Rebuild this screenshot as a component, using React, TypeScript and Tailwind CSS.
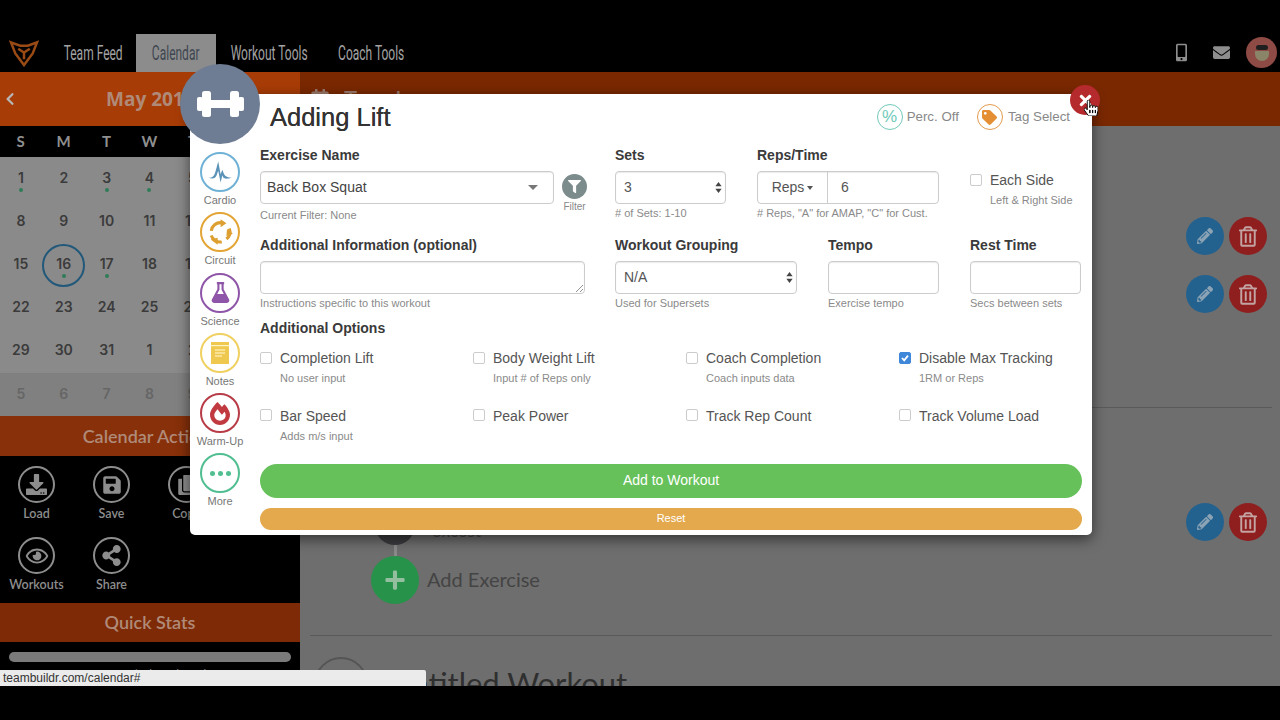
import {
  FaCopy,
  FaEnvelope,
  FaRegEye,
  FaFireAlt,
  FaFilter,
  FaHandPointer,
  FaMobileAlt,
  FaPencilAlt,
  FaPlus,
  FaSave,
  FaShareAlt,
  FaTag,
  FaTimes,
  FaRegTrashAlt,
  FaChevronLeft,
  FaRegCalendarAlt,
  FaDownload,
} from 'react-icons/fa';
import type { ReactNode } from 'react';

const sansFont = "font-['Liberation_Sans',Arial,sans-serif]";
const latoFont = "font-['Lato',sans-serif]";

const calendarDays = [
  { n: 1, dot: true }, { n: 2 }, { n: 3, dot: true }, { n: 4, dot: true }, { n: 5 }, { n: 6 }, { n: 7 },
  { n: 8 }, { n: 9 }, { n: 10 }, { n: 11 }, { n: 12 }, { n: 13 }, { n: 14 },
  { n: 15 }, { n: 16, today: true, dot: true }, { n: 17, dot: true }, { n: 18 }, { n: 19 }, { n: 20 }, { n: 21 },
  { n: 22 }, { n: 23 }, { n: 24 }, { n: 25 }, { n: 26 }, { n: 27 }, { n: 28 },
  { n: 29 }, { n: 30 }, { n: 31 }, { n: 1 }, { n: 2 }, { n: 3 }, { n: 4 },
  { n: 5, muted: true }, { n: 6, muted: true }, { n: 7, muted: true }, { n: 8, muted: true }, { n: 9, muted: true }, { n: 10, muted: true }, { n: 11, muted: true },
];

function NavLabel({ children }: { children: ReactNode }) {
  return <span className="inline-block origin-center scale-x-[0.6] whitespace-nowrap">{children}</span>;
}

function TopNav() {
  return (
    <header className="flex h-[72px] items-end bg-black">
      <svg viewBox="0 0 30 28" className="mb-[5px] ml-[9px] h-[27px] w-[30px]" fill="none" stroke="#9a4a14" strokeWidth="2.6">
        <path d="M1.5 2.5 L11 6 H19 L28.5 2.5 L24 14 L15 26 L6 14 Z" />
        <path d="M9 9 L15 13 L21 9 M15 13 V20" />
      </svg>
      <nav className="ml-[25px] flex h-[38px] font-['Roboto',sans-serif] text-[20px] text-[#a3a3a3]">
        <a className="flex w-[58px] items-center justify-center">
          <NavLabel>Team Feed</NavLabel>
        </a>
        <a className="ml-[14px] flex w-[80px] items-center justify-center bg-[#8c8c8c] text-[#3e4650]">
          <NavLabel>Calendar</NavLabel>
        </a>
        <a className="ml-[14px] flex w-[78px] items-center justify-center">
          <NavLabel>Workout Tools</NavLabel>
        </a>
        <a className="ml-[30px] flex w-[66px] items-center justify-center">
          <NavLabel>Coach Tools</NavLabel>
        </a>
      </nav>
      <div className="ml-auto mb-[4px] flex items-center text-[#8d8d8d]">
        <FaMobileAlt className="mr-[25px] h-[19px] w-[11px]" />
        <FaEnvelope className="mr-[15px] h-[17px] w-[19px]" />
        <div className="mr-[3px] flex h-[31px] w-[31px] flex-col items-center justify-center rounded-full bg-[#8e4a45]">
          <div className="h-[5px] w-[12px] rounded-sm bg-[#1f1f1f]" />
          <div className="mt-[1px] h-[10px] w-[14px] rounded-b-full bg-[#8a8468]" />
        </div>
      </div>
    </header>
  );
}

function ActionIcon({ label, children }: { label: string; children: ReactNode }) {
  return (
    <div className="flex w-[75px] flex-col items-center">
      <div className="flex h-[37px] w-[37px] items-center justify-center rounded-full border-2 border-[#8d8d8d] text-[#8d8d8d]">
        {children}
      </div>
      <span className="mt-[3px] text-[12.5px] font-semibold leading-[16px] text-[#8d8d8d]">{label}</span>
    </div>
  );
}

function Sidebar() {
  return (
    <aside className={`flex h-full w-[300px] shrink-0 flex-col bg-black ${latoFont}`}>
      <div className="flex h-[54px] items-center bg-[#a83c06] pl-[5px]">
        <FaChevronLeft className="h-[14px] w-[10px] text-[#b7b7b7]" />
        <span className="ml-[91px] font-['Open_Sans',sans-serif] text-[19px] font-bold text-[#b08a78]">May 2017</span>
      </div>
      <div className="-ml-[1px] grid h-[31px] grid-cols-7 items-center text-center text-[15px] font-bold text-[#8f8f8f]">
        {['S', 'M', 'T', 'W', 'T', 'F', 'S'].map((d, i) => (
          <span key={i}>{d}</span>
        ))}
      </div>
      <div className="grid grid-cols-7 bg-[#8a8a8a] font-['Inter',sans-serif] text-[14px] font-semibold text-[#3b3b3b]">
        {calendarDays.map((d, i) => (
          <div
            key={i}
            className={`relative -ml-[1px] flex h-[43.2px] items-center justify-center pb-[3px] ${d.muted ? 'bg-[#808080]' : ''}`}
          >
            {d.today && <div className="absolute top-[1px] h-[43px] w-[43px] rounded-full border-2 border-[#22587a]" />}
            <span className={d.muted ? 'text-[#666]' : ''}>{d.n}</span>
            {d.dot && <div className="absolute top-[30.5px] h-[4px] w-[4px] rounded-full bg-[#2f7d58]" />}
          </div>
        ))}
      </div>
      <div className="flex h-[40px] shrink-0 items-center justify-center bg-[#87300a] text-[18px] font-semibold text-[#b08a78]">
        Calendar Actions
      </div>
      <div className="-ml-[1px] flex flex-wrap content-start pt-[10px]">
        <ActionIcon label="Load">
          <FaDownload className="h-[21px] w-[21px]" />
        </ActionIcon>
        <ActionIcon label="Save">
          <FaSave className="h-[20px] w-[20px]" />
        </ActionIcon>
        <ActionIcon label="Copy">
          <FaCopy className="h-[20px] w-[20px]" />
        </ActionIcon>
        <div className="h-[15px] w-full" />
        <ActionIcon label="Workouts">
          <FaRegEye className="h-[20px] w-[26px]" />
        </ActionIcon>
        <ActionIcon label="Share">
          <FaShareAlt className="h-[21px] w-[21px]" />
        </ActionIcon>
      </div>
      <div className="mt-[10px] flex h-[39px] shrink-0 items-center justify-center bg-[#7e2a06] text-[18px] font-semibold text-[#b08a78]">
        Quick Stats
      </div>
      <div className="px-[9px] pt-[10px]">
        <div className="h-[10px] rounded-full bg-[#7a7a7a]" />
        <p className="mt-[4px] text-center text-[11px] font-semibold text-[#777]">Rep Count/Selected Batch 0</p>
      </div>
    </aside>
  );
}

function RoundButtons() {
  return (
    <div className="ml-auto flex gap-[5px] pr-[13px]">
      <div className="flex h-[38px] w-[38px] items-center justify-center rounded-full bg-[#23628f] text-[#8ba3b5]">
        <FaPencilAlt className="h-[16px] w-[16px]" />
      </div>
      <div className="flex h-[38px] w-[38px] items-center justify-center rounded-full bg-[#8f1f1f] text-[#c4a3a3]">
        <FaRegTrashAlt className="h-[21px] w-[18px]" />
      </div>
    </div>
  );
}

function WorkoutContent() {
  return (
    <main className={`flex h-full min-w-0 flex-1 flex-col overflow-hidden bg-[#6e6e6e] ${latoFont}`}>
      <div className="flex h-[54px] shrink-0 items-center bg-[#7a2800] pl-[10px] text-[#9c7b6c]">
        <FaRegCalendarAlt className="h-[20px] w-[20px]" />
        <span className="ml-[14px] text-[22px] font-semibold">Tuesday</span>
      </div>
      <div className="mt-[91px] flex shrink-0">
        <RoundButtons />
      </div>
      <div className="mt-[20px] flex shrink-0">
        <RoundButtons />
      </div>
      <div className="ml-[10px] mr-[8px] mt-[94px] h-px shrink-0 bg-[#5a5a5a]" />
      <div className="mt-[95px] flex shrink-0 items-start pl-[75px]">
        <div className="mt-[2px] h-[40px] w-[40px] rounded-full bg-[#3c3c40]" />
        <span className="ml-[17px] mt-[16px] text-[17px] leading-[24px] text-[#444]">3xcost</span>
        <RoundButtons />
      </div>
      <div className="ml-[94px] h-[11px] w-[3px] shrink-0 bg-[#8a8a8a]" />
      <div className="flex shrink-0 items-center pl-[71px]">
        <div className="flex h-[48px] w-[48px] items-center justify-center rounded-full bg-[#27924a] text-[#94bf9f]">
          <FaPlus className="h-[22px] w-[22px]" />
        </div>
        <span className="ml-[8px] -mt-[2px] text-[20px] text-[#444]">Add Exercise</span>
      </div>
      <div className="ml-[10px] mr-[8px] mt-[31px] h-px shrink-0 bg-[#5a5a5a]" />
      <div className="ml-[14px] mt-[21px] flex shrink-0 items-start">
        <div className="flex h-[54px] w-[54px] items-center justify-center rounded-full border-2 border-[#555] text-[22px] text-[#333]">
          12
        </div>
        <span className="ml-[21px] mt-[8px] text-[31px] leading-[36px] text-[#2f2f2f]">Untitled Workout</span>
      </div>
    </main>
  );
}

function WorkoutType({ label, ring, children }: { label: string; ring: string; children: ReactNode }) {
  return (
    <div className="flex h-[60.3px] flex-col items-center">
      <div className={`flex h-[40px] w-[40px] items-center justify-center rounded-full border-[2.5px] ${ring}`}>{children}</div>
      <span className="text-[11px] leading-[16px] text-[#777]">{label}</span>
    </div>
  );
}

function FieldLabel({ children }: { children: ReactNode }) {
  return <label className="mb-[6px] block text-[14px] font-bold leading-[20px] text-[#3a3a3a]">{children}</label>;
}

function Help({ children }: { children: ReactNode }) {
  return <p className="mt-[2px] text-[11px] leading-[14px] text-[#8a8a8a]">{children}</p>;
}

function Spinner() {
  return (
    <svg viewBox="0 0 8 14" className="h-[11px] w-[7px] fill-[#444]">
      <path d="M4 0 L8 5.5 H0 Z M4 14 L8 8.5 H0 Z" />
    </svg>
  );
}

const inputBox = 'h-[33px] rounded-[4px] border border-[#ccc] shadow-[inset_0_1px_1px_rgba(0,0,0,0.08)]';

function Option({ label, help, checked }: { label: string; help?: string; checked?: boolean }) {
  return (
    <div className="flex h-[57.5px] items-start">
      <div
        className={`mt-[3.5px] flex h-[12px] w-[12px] shrink-0 items-center justify-center rounded-[2px] border ${
          checked ? 'border-[#3f87d8] bg-[#3f87d8]' : 'border-[#ccc] bg-white'
        }`}
      >
        {checked && (
          <svg viewBox="0 0 10 10" className="h-[10px] w-[10px]" fill="none" stroke="white" strokeWidth="1.8">
            <path d="M2 5 L4.2 7.4 L8 2.6" />
          </svg>
        )}
      </div>
      <div className="ml-[8px]">
        <div className="text-[14px] leading-[20px] text-[#555]">{label}</div>
        {help && <div className="mt-[2px] text-[11px] leading-[16px] text-[#8a8a8a]">{help}</div>}
      </div>
    </div>
  );
}

function AddLiftModal() {
  return (
    <div className={`absolute left-[190px] top-[94px] flex h-[441px] w-[902px] rounded-[5px] bg-white shadow-[0_4px_14px_rgba(0,0,0,0.55)] ${sansFont}`}>
      <div className="absolute -left-[10px] -top-[30px] flex h-[80px] w-[80px] items-center justify-center rounded-full bg-[#6e7d93]">
        <svg viewBox="0 0 47 30" className="h-[30px] w-[47px] fill-white">
          <rect x="0" y="8" width="6" height="14" rx="2" />
          <rect x="5" y="2" width="9" height="26" rx="2.5" />
          <rect x="13" y="11" width="21" height="8" />
          <rect x="33" y="2" width="9" height="26" rx="2.5" />
          <rect x="41" y="8" width="6" height="14" rx="2" />
        </svg>
      </div>
      <div className="absolute -right-[8px] -top-[9px] flex h-[30px] w-[30px] items-center justify-center rounded-full bg-[#b52a2d] text-white">
        <FaTimes className="h-[17px] w-[17px]" />
      </div>
      <FaHandPointer className="absolute -right-[6px] top-[6px] h-[16px] w-[14px] text-white" stroke="black" strokeWidth="30" />

      <div className="flex w-[60px] shrink-0 flex-col items-center pt-[58px]">
        <WorkoutType label="Cardio" ring="border-[#6fb2d6]">
          <svg viewBox="0 0 24 24" className="h-[28px] w-[28px] fill-[#5c93b8]">
            <path d="M2 17 C6 17 7 15 8 12 L10.5 3 L12.5 14 L14 10 L15.5 14 C16.5 16 19 17 22 17 C18 18 16 18 15 17 L14 15 L12.5 21 L10.5 11 L9 15 C8 17.5 6 18 2 17 Z" />
          </svg>
        </WorkoutType>
        <WorkoutType label="Circuit" ring="border-[#e3a535]">
          <svg viewBox="0 0 24 24" className="h-[28px] w-[28px]" fill="none" stroke="#dd9f30" strokeWidth="2.6">
            <path d="M4.5 11 A8 8 0 0 1 13 4" />
            <path d="M20 9 A8 8 0 0 1 17.5 18" />
            <path d="M13.5 20.5 A8 8 0 0 1 4.5 15" />
            <path d="M12.5 1 L17.5 4.5 L12.5 8 Z M23 13.5 L17.5 15.5 L18 9.5 Z M10 23 L10 17 L4 18.5 Z" fill="#dd9f30" stroke="none" />
          </svg>
        </WorkoutType>
        <WorkoutType label="Science" ring="border-[#8e55a8]">
          <svg viewBox="0 0 24 24" className="h-[25px] w-[25px]" fill="none" stroke="#8e55a8" strokeWidth="2">
            <path d="M8.5 3 H15.5 M10 3 V9 L4.6 19.2 A1.3 1.3 0 0 0 5.8 21 H18.2 A1.3 1.3 0 0 0 19.4 19.2 L14 9 V3" />
            <path d="M7.8 13.5 H16.2 L19.4 19.5 A1 1 0 0 1 18.4 21 H5.6 A1 1 0 0 1 4.6 19.5 Z" fill="#8e55a8" stroke="none" />
          </svg>
        </WorkoutType>
        <WorkoutType label="Notes" ring="border-[#efd060]">
          <svg viewBox="0 0 20 24" className="h-[24px] w-[20px]">
            <rect x="1" y="1" width="18" height="22" fill="#efc94f" />
            <rect x="1" y="4" width="18" height="1.2" fill="#fff3c4" />
            <path d="M5 9 H15 M5 12 H15 M5 15 H12" stroke="#fbe9a6" strokeWidth="1.5" />
          </svg>
        </WorkoutType>
        <WorkoutType label="Warm-Up" ring="border-[#b83c47]">
          <FaFireAlt className="h-[23px] w-[20px] text-[#c03a40]" />
        </WorkoutType>
        <WorkoutType label="More" ring="border-[#50be90]">
          <div className="flex gap-[3px]">
            <span className="h-[5px] w-[5px] rounded-full bg-[#50be90]" />
            <span className="h-[5px] w-[5px] rounded-full bg-[#50be90]" />
            <span className="h-[5px] w-[5px] rounded-full bg-[#50be90]" />
          </div>
        </WorkoutType>
      </div>

      <div className="flex min-w-0 flex-1 flex-col pl-[10px] pr-[10px]">
        <div className="flex h-[51px] items-center">
          <h2 className="-mt-[5px] ml-[10px] text-[25.5px] leading-[30px] text-[#333] [text-shadow:0_0_0.5px_#333]">Adding Lift</h2>
          <div className="ml-auto -mt-[5px] flex items-center pr-[12px] text-[13.3px] text-[#888]">
            <div className="flex h-[26px] w-[26px] items-center justify-center rounded-full border-[1.5px] border-[#71c9b8] text-[17px] text-[#71c9b8]">%</div>
            <span className="ml-[4px]">Perc. Off</span>
            <div className="ml-[18px] flex h-[26px] w-[26px] items-center justify-center rounded-full border-[1.5px] border-[#e39a4c] text-[#e58f35]">
              <FaTag className="h-[15px] w-[15px]" />
            </div>
            <span className="ml-[5px]">Tag Select</span>
          </div>
        </div>

        <div className="flex h-[90px]">
          <div className="w-[355px]">
            <FieldLabel>Exercise Name</FieldLabel>
            <div className="flex items-start">
              <div className={`flex w-[294px] items-center justify-between pl-[6px] pr-[15px] text-[14px] text-[#444] ${inputBox}`}>
                Back Box Squat
                <span className="h-0 w-0 border-x-[5px] border-t-[5px] border-x-transparent border-t-[#777]" />
              </div>
              <div className="ml-[7px] flex w-[27px] flex-col items-center">
                <div className="mt-[3px] flex h-[25px] w-[25px] items-center justify-center rounded-full bg-[#7c8b8b] text-white">
                  <FaFilter className="h-[13px] w-[13px]" />
                </div>
                <span className="mt-[1px] text-[10px] leading-[14px] text-[#888]">Filter</span>
              </div>
            </div>
            <p className="-mt-[6px] text-[11px] leading-[14px] text-[#8a8a8a]">Current Filter: None</p>
          </div>
          <div className="w-[142px]">
            <FieldLabel>Sets</FieldLabel>
            <div className={`flex w-[111px] items-center justify-between pl-[8px] pr-[3px] text-[14px] text-[#555] ${inputBox}`}>
              3
              <Spinner />
            </div>
            <Help># of Sets: 1-10</Help>
          </div>
          <div className="w-[213px]">
            <FieldLabel>Reps/Time</FieldLabel>
            <div className={`flex w-[182px] items-center text-[14px] text-[#555] ${inputBox}`}>
              <div className="flex h-full w-[70px] items-center justify-center gap-[3px] border-r border-[#ccc]">
                Reps
                <span className="h-0 w-0 border-x-[3.5px] border-t-[4px] border-x-transparent border-t-[#555]" />
              </div>
              <span className="pl-[13px]">6</span>
            </div>
            <Help># Reps, "A" for AMAP, "C" for Cust.</Help>
          </div>
          <div className="pt-[25px]">
            <Option label="Each Side" help="Left & Right Side" />
          </div>
        </div>

        <div className="flex h-[75px]">
          <div className="w-[355px]">
            <FieldLabel>Additional Information (optional)</FieldLabel>
            <div className={`relative w-[325px] ${inputBox}`}>
              <svg viewBox="0 0 8 8" className="absolute bottom-[1px] right-[1px] h-[8px] w-[8px]" stroke="#777" strokeWidth="0.8">
                <path d="M1 8 L8 1 M5 8 L8 5" />
              </svg>
            </div>
            <Help>Instructions specific to this workout</Help>
          </div>
          <div className="w-[213px]">
            <FieldLabel>Workout Grouping</FieldLabel>
            <div className={`flex w-[182px] items-center justify-between pl-[8px] pr-[3px] text-[14px] text-[#555] ${inputBox}`}>
              N/A
              <Spinner />
            </div>
            <Help>Used for Supersets</Help>
          </div>
          <div className="w-[142px]">
            <FieldLabel>Tempo</FieldLabel>
            <div className={`w-[111px] ${inputBox}`} />
            <Help>Exercise tempo</Help>
          </div>
          <div>
            <FieldLabel>Rest Time</FieldLabel>
            <div className={`w-[111px] ${inputBox}`} />
            <Help>Secs between sets</Help>
          </div>
        </div>

        <div className="mt-[8px] text-[14px] font-bold leading-[20px] text-[#3a3a3a]">Additional Options</div>
        <div className="mt-[10px] grid grid-cols-[213px_213px_213px_1fr]">
          <Option label="Completion Lift" help="No user input" />
          <Option label="Body Weight Lift" help="Input # of Reps only" />
          <Option label="Coach Completion" help="Coach inputs data" />
          <Option label="Disable Max Tracking" help="1RM or Reps" checked />
          <Option label="Bar Speed" help="Adds m/s input" />
          <Option label="Peak Power" />
          <Option label="Track Rep Count" />
          <Option label="Track Volume Load" />
        </div>

        <button className="mt-[1px] h-[34px] w-full shrink-0 rounded-full bg-[#66c15a] pb-[1px] text-[14px] text-white">Add to Workout</button>
        <button className="mt-[10px] h-[22px] w-full shrink-0 rounded-full bg-[#e3a94c] pb-[1px] text-[11px] text-white">Reset</button>
      </div>
    </div>
  );
}

export default function App() {
  return (
    <div className="relative h-[720px] w-[1280px] overflow-hidden bg-black">
      <TopNav />
      <div className="flex h-[614px]">
        <Sidebar />
        <WorkoutContent />
      </div>
      <AddLiftModal />
      <div className={`absolute left-0 top-[670px] flex h-[16px] w-[426px] items-center rounded-tr-[2px] bg-[#ebebeb] pl-[3px] text-[12px] text-[#333] ${sansFont}`}>
        teambuildr.com/calendar#
      </div>
    </div>
  );
}
